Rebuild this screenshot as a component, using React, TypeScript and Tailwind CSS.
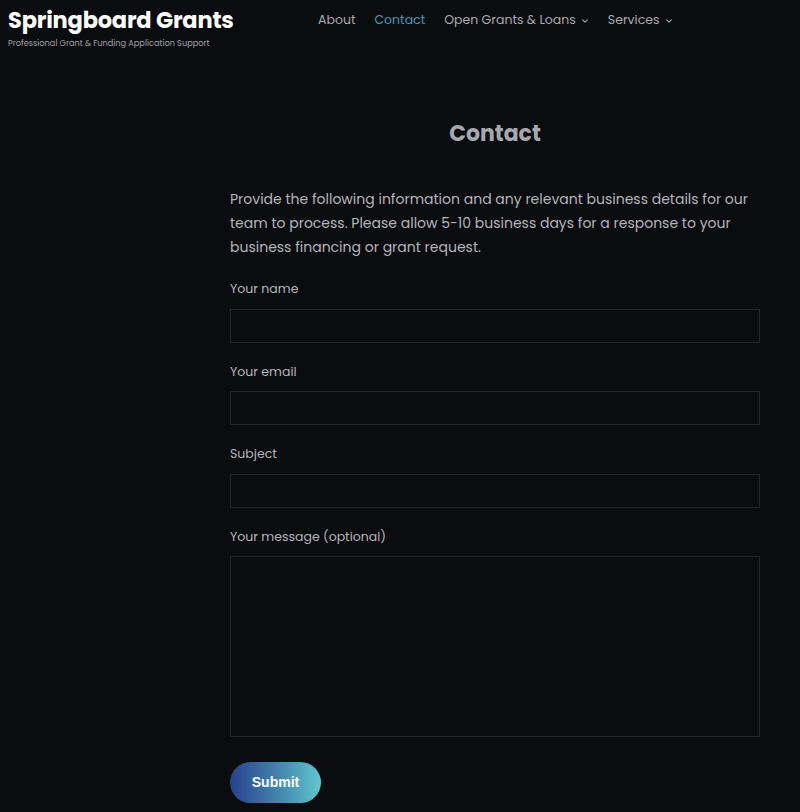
import React from 'react'

const font = {fontFamily: 'Poppins, Inter, "Noto Sans", sans-serif'}

function Chevron() {
  return (
    <svg width="8" height="8" viewBox="0 0 10 10" className="ml-[5px] mt-[2px]" fill="none">
      <path d="M2 3.5 L5 6.5 L8 3.5" stroke="currentColor" strokeWidth="1.3" strokeLinecap="round" strokeLinejoin="round" />
    </svg>
  )
}

function Field({label, tall}: {label: string; tall?: boolean}) {
  return (
    <div className="flex flex-col">
      <label className="text-[12.5px] leading-[20px] text-[#b4b5ba]">{label}</label>
      {tall ? (
        <textarea className="mt-[9.5px] h-[181px] w-full resize-none border border-[#25262b] bg-transparent" />
      ) : (
        <input className="mt-[9.5px] h-[34px] w-full border border-[#25262b] bg-transparent" />
      )}
    </div>
  )
}

export default function App() {
  return (
    <div className="min-h-[812px] bg-[#0b0c10] text-[#b4b5ba]" style={font}>
      {/* header */}
      <header className="flex items-start px-2 pt-[5px]">
        <div className="w-[310px]">
          <div className="text-[22.5px] font-bold leading-[30px] tracking-[-0.2px] text-white">Springboard Grants</div>
          <div className="mt-[2px] text-[8.2px] leading-[12px] text-[#9fa0a5]">Professional Grant &amp; Funding Application Support</div>
        </div>
        <nav className="flex items-center gap-[19px] pt-[3px] text-[12.5px] leading-[24px] text-[#a9aaaf]">
          <a>About</a>
          <a className="text-[#3f9bbd]">Contact</a>
          <a className="flex items-center">Open Grants &amp; Loans<Chevron /></a>
          <a className="flex items-center">Services<Chevron /></a>
        </nav>
      </header>

      {/* content */}
      <main className="ml-[230px] w-[530px] pt-[69px] pb-2">
        <h1 className="text-center text-[22px] font-bold leading-[32px] text-[#a7a8ad]">Contact</h1>
        <p className="mt-[37px] text-[14px] leading-[24px] text-[#b4b5ba]">
          Provide the following information and any relevant business details for our team to process. Please allow 5-10 business days for a response to your business financing or grant request.
        </p>
        <form className="mt-[20px] flex flex-col gap-[19px]">
          <Field label="Your name" />
          <Field label="Your email" />
          <Field label="Subject" />
          <Field label="Your message (optional)" tall />
          <div className="mt-[6px]">
            <button
              type="button"
              className="h-[41px] w-[91px] rounded-full bg-gradient-to-r from-[#2a3f8c] to-[#5fc6cc] text-[14px] font-bold text-white"
              style={{fontFamily: '"Liberation Sans", Arial, sans-serif'}}
            >
              Submit
            </button>
          </div>
        </form>
      </main>
    </div>
  )
}
